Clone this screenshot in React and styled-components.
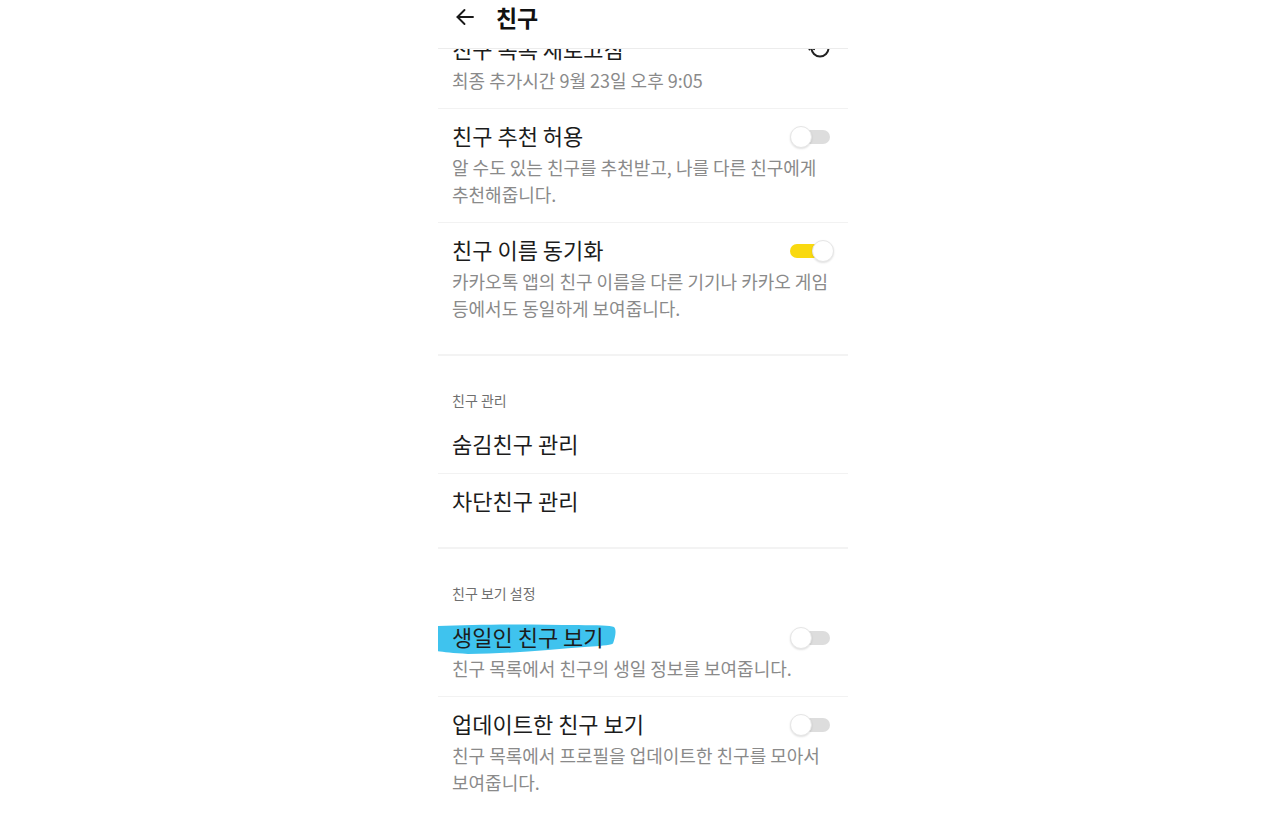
import React from 'react';
import styled, { createGlobalStyle } from 'styled-components';

const GlobalStyle = createGlobalStyle`
  html, body {
    margin: 0;
    padding: 0;
    background: #fff;
  }
  body {
    font-family: "Noto Sans CJK KR", "Noto Sans", sans-serif;
    color: #1c1c1c;
    word-break: keep-all;
  }
`;

const Page = styled.div`
  height: 822px;
  overflow: hidden;
  padding-left: 438px;
`;

const Screen = styled.div`
  width: 410px;
  height: 822px;
  display: flex;
  flex-direction: column;
  background: #fff;
`;

const Header = styled.header`
  height: 48px;
  flex: none;
  display: flex;
  align-items: center;
  gap: 20px;
  padding-left: 16px;
  border-bottom: 1px solid #ececec;
  background: #fff;
  position: relative;
  z-index: 2;
`;

const BackButton = styled.div`
  width: 22px;
  height: 22px;
  display: flex;
  align-items: center;
  justify-content: center;
  margin-top: -14px;
`;

const HeaderTitle = styled.h1`
  margin: -15px 0 0;
  font-size: 23px;
  font-weight: 700;
  color: #111;
  letter-spacing: -0.2px;
`;

const Scroll = styled.div`
  flex: 1;
  overflow: hidden;
`;

const Content = styled.div`
  margin-top: -27px;
`;

const Row = styled.div`
  display: flex;
  flex-direction: column;
  justify-content: center;
  min-height: ${p => (p.$single ? '56px' : 'auto')};
  padding: ${p => (p.$single ? '0 15px 4px 14px' : '11px 15px 14px 14px')};
  box-sizing: border-box;

  & + & {
    border-top: 1px solid #f2f2f2;
  }
`;

const Head = styled.div`
  position: relative;
  display: flex;
  align-items: center;
`;

const Title = styled.div`
  position: relative;
  flex: 1;
  font-size: 22px;
  line-height: 30px;
  color: #1c1c1c;
  z-index: 1;
`;

const Desc = styled.div`
  margin-top: 4px;
  margin-right: -8px;
  font-size: 18px;
  line-height: 27px;
  color: #8a8a8a;
  word-break: keep-all;
`;

const Trailing = styled.div`
  flex: none;
  height: 30px;
  display: flex;
  align-items: center;
  margin-left: 8px;
  position: relative;
  z-index: 1;
`;

const Track = styled.div`
  position: relative;
  width: 43px;
  height: 22px;
  margin-top: 3px;
  display: flex;
  align-items: center;
  justify-content: flex-end;
`;

const TrackBar = styled.div`
  width: ${p => (p.$on ? '37px' : '32px')};
  height: 14px;
  border-radius: 7px;
  background: ${p => (p.$on ? '#f9d90f' : '#dddddd')};
  margin-right: ${p => (p.$on ? '6px' : '3px')};
`;

const Knob = styled.div`
  position: absolute;
  top: 0;
  left: ${p => (p.$on ? '22px' : '0')};
  width: 20px;
  height: 20px;
  border-radius: 50%;
  background: #fff;
  border: 1px solid #e6e6e6;
  box-shadow: 0 1px 2px rgba(0, 0, 0, 0.12);
`;

const SectionGap = styled.div`
  height: 18px;
  border-bottom: 2px solid #f3f3f3;
`;

const SectionLabel = styled.div`
  padding: 34px 14px 7px;
  font-size: 14px;
  line-height: 20px;
  color: #6f6f6f;
`;

const Highlight = styled.svg`
  position: absolute;
  left: -14px;
  top: 2px;
  width: 180px;
  height: 35px;
  z-index: 0;
  pointer-events: none;
`;

const Toggle = ({ on }) => (
  <Trailing>
    <Track>
      <TrackBar $on={on} />
      <Knob $on={on} />
    </Track>
  </Trailing>
);

const RefreshIcon = () => (
  <Trailing style={{ marginRight: '1px' }}>
    <svg width="24" height="24" viewBox="0 0 24 24" fill="none" stroke="#222" strokeWidth="2" strokeLinecap="round" strokeLinejoin="round">
      <path d="M20.5 12a8.5 8.5 0 0 1-17 0" />
      <path d="M1.5 13.5L3.5 10l2.5 3.2" />
    </svg>
  </Trailing>
);

const items = [
  { title: '친구 추천 허용', desc: '알 수도 있는 친구를 추천받고, 나를 다른 친구에게 추천해줍니다.', on: false },
  { title: '친구 이름 동기화', desc: '카카오톡 앱의 친구 이름을 다른 기기나 카카오 게임 등에서도 동일하게 보여줍니다.', on: true },
];

export default function App() {
  return (
    <>
      <GlobalStyle />
      <Page>
        <Screen>
          <Header>
            <BackButton>
              <svg width="20" height="20" viewBox="0 0 20 20" fill="none" stroke="#1a1a1a" strokeWidth="1.9" strokeLinecap="round" strokeLinejoin="round">
                <path d="M18 10H2.5" />
                <path d="M9.5 3L2.5 10l7 7" />
              </svg>
            </BackButton>
            <HeaderTitle>친구</HeaderTitle>
          </Header>
          <Scroll>
            <Content>
              <Row>
                <Head>
                  <Title>친구 목록 새로고침</Title>
                  <RefreshIcon />
                </Head>
                <Desc>최종 추가시간 9월 23일 오후 9:05</Desc>
              </Row>
              {items.map(it => (
                <Row key={it.title}>
                  <Head>
                    <Title>{it.title}</Title>
                    <Toggle on={it.on} />
                  </Head>
                  <Desc>{it.desc}</Desc>
                </Row>
              ))}
              <SectionGap />

              <SectionLabel>친구 관리</SectionLabel>
              <Row $single>
                <Head>
                  <Title>숨김친구 관리</Title>
                </Head>
              </Row>
              <Row $single>
                <Head>
                  <Title>차단친구 관리</Title>
                </Head>
              </Row>
              <SectionGap />

              <SectionLabel>친구 보기 설정</SectionLabel>
              <Row>
                <Head>
                  <Highlight viewBox="0 0 180 34" preserveAspectRatio="none">
                    <path
                      d="M0 3 C40 1 90 1 140 2 C160 2.5 172 2 176 4 C179 7 177 14 175 20 C172 22 160 22.5 150 23 C110 26 70 30 30 30 C15 29.5 5 28 0 27.5 Z"
                      fill="#3fc3ee"
                    />
                  </Highlight>
                  <Title>생일인 친구 보기</Title>
                  <Toggle on={false} />
                </Head>
                <Desc>친구 목록에서 친구의 생일 정보를 보여줍니다.</Desc>
              </Row>
              <Row>
                <Head>
                  <Title>업데이트한 친구 보기</Title>
                  <Toggle on={false} />
                </Head>
                <Desc>친구 목록에서 프로필을 업데이트한 친구를 모아서 보여줍니다.</Desc>
              </Row>
            </Content>
          </Scroll>
        </Screen>
      </Page>
    </>
  );
}
